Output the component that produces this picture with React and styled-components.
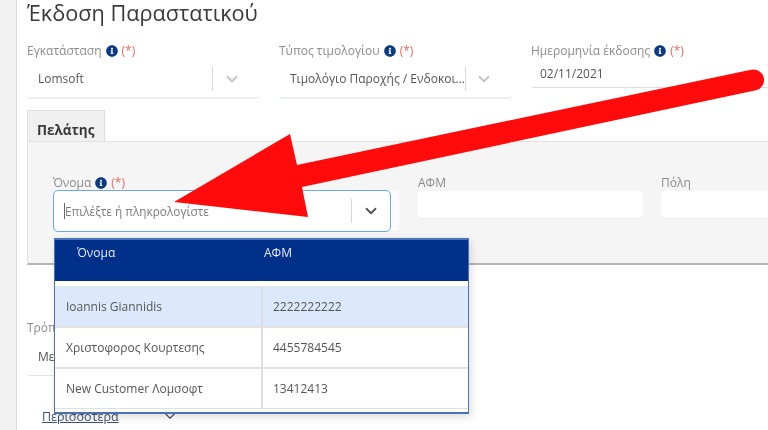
import React from 'react';
import styled, { createGlobalStyle } from 'styled-components';
import { FaInfoCircle } from 'react-icons/fa';
import { ChevronDown } from 'lucide-react';

const GlobalStyle = createGlobalStyle`
  html, body {
    margin: 0;
    padding: 0;
    background: #fff;
    font-family: "Open Sans", "Noto Sans", sans-serif;
  }
`;

const customers = [
  { name: 'Ioannis Giannidis', vat: '2222222222', selected: true },
  { name: 'Χριστοφορος Κουρτεσης', vat: '4455784545' },
  { name: 'New Customer Λομσοφτ', vat: '13412413' },
];

const Page = styled.div`
  position: relative;
  width: 768px;
  height: 430px;
  overflow: hidden;
  display: flex;
`;

const SideStrip = styled.div`
  width: 16px;
  flex: none;
  background: #f1f1f1;
  border-right: 1px solid #dcdcdc;
`;

const Main = styled.main`
  flex: none;
  width: 800px;
  padding-left: 10px;
  filter: blur(0.3px);
`;

const Title = styled.h1`
  margin: 0;
  height: 26px;
  font-size: 21.7px;
  line-height: 26px;
  font-weight: 400;
  color: #3a3a3a;
`;

const TopRow = styled.div`
  display: grid;
  grid-template-columns: 233px 233px 260px;
  column-gap: 19px;
  margin-top: 16px;
`;

const LabelText = styled.label`
  display: flex;
  align-items: center;
  gap: 4px;
  height: 17px;
  font-size: 12px;
  line-height: 17px;
  color: #8b8b8b;
`;

const InfoIcon = styled(FaInfoCircle)`
  width: 12px;
  height: 12px;
  color: #0b3a82;
`;

const Required = styled.span`
  color: #f0675c;
`;

const SelectBox = styled.div`
  display: flex;
  align-items: center;
  box-sizing: border-box;
  height: 34px;
  margin-top: 6px;
  padding: 0 9px 5px 11px;
  border-bottom: 2px solid #eaeef3;
  border-radius: 4px;
  font-size: 12px;
  color: #555;
`;

const SelectValue = styled.span`
  flex: 1;
  white-space: nowrap;
`;

const Separator = styled.span`
  width: 1px;
  height: 24px;
  background: #d8d8d8;
`;

const Caret = styled.span`
  display: flex;
  justify-content: center;
  width: 38px;
  color: ${(p) => (p.$dark ? '#555' : '#c4c4c4')};
`;

const DateBox = styled.div`
  height: 26px;
  margin-top: 2px;
  width: 240px;
  padding-left: 9px;
  border-bottom: 1px solid #dcdcdc;
  border-radius: 3px;
  font-size: 12px;
  line-height: 25px;
  color: #555;
`;

const Tab = styled.div`
  width: 78px;
  height: 31px;
  margin-top: 11px;
  box-sizing: border-box;
  padding: 10px 0 0 9px;
  background: #f0f0f0;
  border: 1px solid #dedede;
  border-bottom: none;
  font-size: 13.5px;
  line-height: 18px;
  font-weight: 700;
  color: #3a3a3a;
`;

const Panel = styled.section`
  box-sizing: border-box;
  height: 124px;
  padding: 32px 0 0 25px;
  display: grid;
  grid-template-columns: 347px 225px 200px;
  column-gap: 18px;
  align-items: start;
  background: #f5f5f5;
  border-top: 1px solid #e2e2e2;
  border-left: 1px solid #e2e2e2;
  border-bottom: 2px solid #b5b5b5;
`;

const Field = styled.div`
  position: relative;
`;

const NameInput = styled.div`
  display: flex;
  align-items: center;
  box-sizing: border-box;
  width: 338px;
  height: 42px;
  margin-top: -1px;
  padding-left: 10px;
  background: #fff;
  border: 1px solid #6aa9f2;
  border-radius: 5px;
  box-shadow: 9px 0 0 -1px #fbfbfb;
  font-size: 11.8px;
  color: #7b7b7b;
`;

const Placeholder = styled.span`
  flex: 1;
  border-left: 1px solid #666;
  white-space: nowrap;
`;

const PlainInput = styled.div`
  height: 27px;
  background: #fff;
  border-bottom: 1px solid #e6ebf2;
  border-radius: 4px;
`;

const Dropdown = styled.div`
  position: absolute;
  left: 1px;
  top: 64px;
  width: 415px;
  box-sizing: border-box;
  background: #fff;
  border: 1px solid #4b72b5;
  border-top-width: 2px;
  border-bottom-width: 2px;
  box-shadow: 2px 3px 8px rgba(0, 0, 0, 0.14);
  z-index: 2;
`;

const DropdownHead = styled.div`
  display: grid;
  grid-template-columns: 206px 1fr;
  height: 41px;
  margin-bottom: 5px;
  background: #00308a;
  font-size: 12px;
  line-height: 26px;
  color: #e8edf6;
`;

const HeadCell = styled.span`
  padding-left: ${(p) => p.$pad}px;
`;

const Row = styled.div`
  display: grid;
  grid-template-columns: 206px 1fr;
  height: 41px;
  box-sizing: border-box;
  border-top: 1px solid #e4e4e4;
  border-bottom: 1px solid #e0e0e0;
  background: ${(p) => (p.$selected ? '#dce9fc' : '#fff')};
  font-size: 12px;
  line-height: 39px;
  color: #555;
  &:last-child {
    margin-bottom: 3px;
  }
`;

const Cell = styled.span`
  padding-left: 11px;
  white-space: nowrap;
  & + & {
    border-left: 2px solid #dedede;
    padding-left: 10px;
  }
`;

const PaymentLabel = styled.div`
  margin-top: 54px;
  font-size: 12px;
  line-height: 17px;
  color: #8b8b8b;
`;

const PaymentValue = styled.div`
  width: 233px;
  box-sizing: border-box;
  height: 40px;
  padding: 9px 0 0 11px;
  border-bottom: 1px solid #e4e4e4;
  border-radius: 3px;
  font-size: 12px;
  line-height: 24px;
  color: #555;
`;

const MoreRow = styled.div`
  display: flex;
  align-items: center;
  gap: 42px;
  margin: 31px 0 0 15px;
  font-size: 12.5px;
  line-height: 17px;
  color: #3f4f6e;
`;

const MoreLink = styled.span`
  text-decoration: underline;
`;

const ArrowOverlay = styled.svg`
  position: absolute;
  left: 0;
  top: 0;
  z-index: 3;
  pointer-events: none;
`;

const Arrow = () => (
  <ArrowOverlay width="768" height="430" viewBox="0 0 768 430">
    <path
      fill="#ff0b0b"
      d="M174 202 L290 134 L297 165 L751 69.8 A10.5 10.5 0 0 1 756 90.3 L302 187 L308 217 Z"
    />
  </ArrowOverlay>
);

const Label = ({ children, info, required }) => (
  <LabelText>
    {children}
    {info && <InfoIcon />}
    {required && <Required>(*)</Required>}
  </LabelText>
);

const App = () => (
  <Page>
    <GlobalStyle />
    <SideStrip />
    <Main>
      <Title>Έκδοση Παραστατικού</Title>
      <TopRow>
        <div>
          <Label info required>Εγκατάσταση</Label>
          <SelectBox>
            <SelectValue>Lomsoft</SelectValue>
            <Separator />
            <Caret><ChevronDown size={18} strokeWidth={2.5} /></Caret>
          </SelectBox>
        </div>
        <div>
          <Label info required>Τύπος τιμολογίου</Label>
          <SelectBox>
            <SelectValue>Τιμολόγιο Παροχής / Ενδοκοι...</SelectValue>
            <Separator />
            <Caret><ChevronDown size={18} strokeWidth={2.5} /></Caret>
          </SelectBox>
        </div>
        <div>
          <Label info required>Ημερομηνία έκδοσης</Label>
          <DateBox>02/11/2021</DateBox>
        </div>
      </TopRow>
      <Tab>Πελάτης</Tab>
      <Panel>
        <Field>
          <Label info required>Όνομα</Label>
          <NameInput>
            <Placeholder>Επιλέξτε ή πληκρολογίστε</Placeholder>
            <Separator />
            <Caret $dark><ChevronDown size={18} strokeWidth={2.5} /></Caret>
          </NameInput>
          <Dropdown>
            <DropdownHead>
              <HeadCell $pad={22}>Όνομα</HeadCell>
              <HeadCell $pad={3}>ΑΦΜ</HeadCell>
            </DropdownHead>
            {customers.map((c) => (
              <Row key={c.vat} $selected={c.selected}>
                <Cell>{c.name}</Cell>
                <Cell>{c.vat}</Cell>
              </Row>
            ))}
          </Dropdown>
        </Field>
        <Field>
          <Label>ΑΦΜ</Label>
          <PlainInput />
        </Field>
        <Field>
          <Label>Πόλη</Label>
          <PlainInput />
        </Field>
      </Panel>
      <PaymentLabel>Τρόπος πληρωμής</PaymentLabel>
      <PaymentValue>Μετρητά</PaymentValue>
      <MoreRow>
        <MoreLink>Περισσότερα</MoreLink>
        <ChevronDown size={18} strokeWidth={1.5} />
      </MoreRow>
    </Main>
    <Arrow />
  </Page>
);

export default App;
